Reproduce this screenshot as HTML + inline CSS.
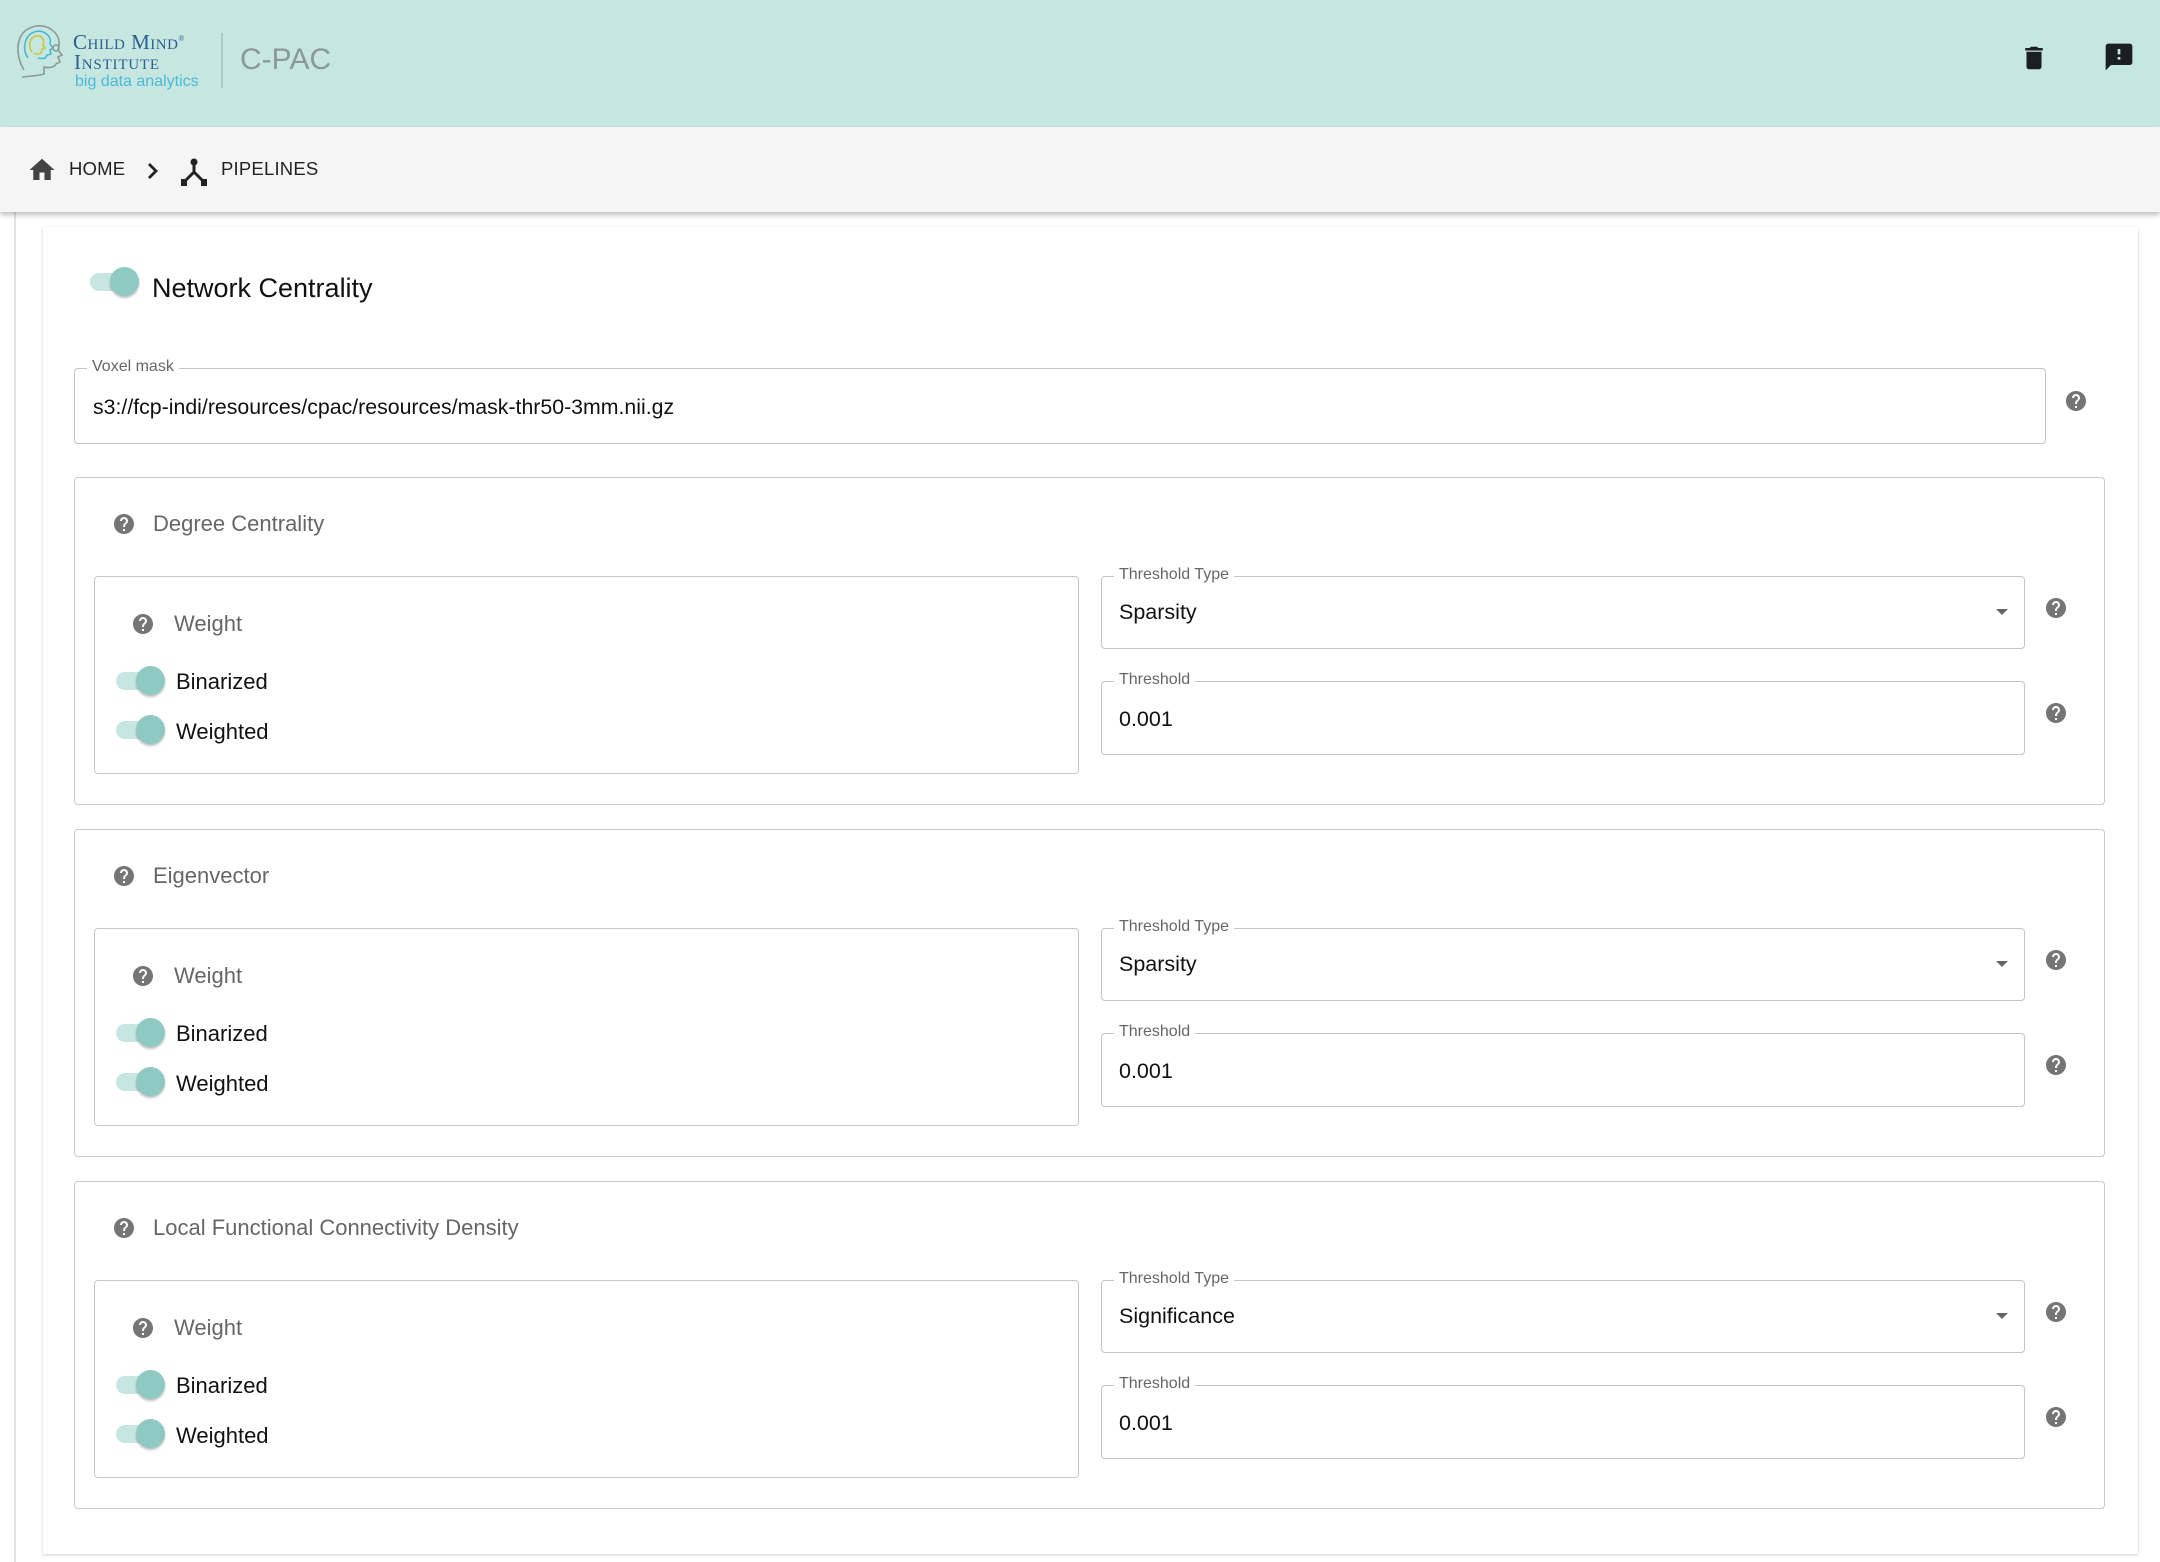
<!DOCTYPE html>
<html><head><meta charset="utf-8"><style>
*{box-sizing:border-box;margin:0;padding:0}
body{width:2160px;height:1562px;overflow:hidden;background:#fff;font-family:"Liberation Sans",sans-serif;position:relative}
.abs{position:absolute}
.hdr{left:0;top:0;width:2160px;height:127px;background:#c6e6e0}
.bc{left:0;top:127px;width:2160px;height:85px;background:#f5f5f5;box-shadow:0 3px 5px rgba(0,0,0,.25);z-index:2}
.bc span{position:absolute;top:31px;font-size:18.5px;color:#222;letter-spacing:.2px}
.card{left:43px;top:227px;width:2095px;height:1327px;background:#fff;box-shadow:0 1px 3px rgba(0,0,0,.2)}
.field{position:absolute;border:1.5px solid #c4c4c4;border-radius:4px}
.field .lab{position:absolute;left:12px;top:-11px;background:#fff;padding:0 5px;font-size:16px;color:#666}
.field .val{position:absolute;left:17px;font-size:21.5px;color:#111}
.sec{position:absolute;left:74px;width:2031px;height:328px;border:1.5px solid #c8c8c8;border-radius:4px}
.help{position:absolute;width:24px;height:24px}
.tg{position:absolute;width:50px;height:30px}
.tg .tr{position:absolute;left:0;top:6px;width:40px;height:18px;border-radius:9px;background:#c7e5e1}
.tg .th{position:absolute;left:20px;top:0;width:29px;height:29px;border-radius:50%;background:#8ecac2;box-shadow:0 2px 2px rgba(0,0,0,.25)}
.txt{position:absolute;white-space:nowrap}
</style></head><body>
<div class="abs hdr">
<svg class="abs" style="left:16px;top:22px" width="52" height="58" viewBox="0 0 52 58" fill="none" stroke-width="1.6">
<path d="M8 48 C2 38 0 26 4 16 C9 4 26 0 36 8 C44 14 44 22 42 28 L46 33 L42 35 L44 40 L40 42 C38 46 32 46 28 45 L28 52 C22 54 14 54 6 55" stroke="#8a9a9a"/>
<path d="M12 36 C6 28 8 14 18 10 C28 7 36 14 34 22 L37 26 L34 28 L35 32 L31 33 C30 37 26 37 22 36" stroke="#4bb8d8"/>
<path d="M16 30 C12 24 13 16 20 14 C26 13 29 18 27 23 L29 26 L26 27 L25 31 C22 33 19 32 18 31" stroke="#c8c840"/>
<circle cx="40" cy="26" r="3" stroke="#8a9a9a"/>
</svg>
<div class="txt" style="left:73px;top:30px;font-family:'Liberation Serif',serif;font-size:21px;color:#2b5f8e;font-variant:small-caps;letter-spacing:.5px">Child Mind<sup style="font-size:8px">®</sup></div>
<div class="txt" style="left:74px;top:50px;font-family:'Liberation Serif',serif;font-size:21px;color:#2b5f8e;font-variant:small-caps;letter-spacing:.8px">Institute</div>
<div class="txt" style="left:75px;top:73px;font-size:16px;color:#4bb8d8">big data analytics</div>
<div class="abs" style="left:221px;top:33px;width:1.5px;height:55px;background:#a8ccc6"></div>
<div class="txt" style="left:240px;top:43px;font-size:30px;color:#8a9896">C-PAC</div>
<svg class="abs" style="left:2019px;top:43px" width="30" height="30" viewBox="0 0 24 24"><path fill="#1b1f1f" d="M6 19c0 1.1.9 2 2 2h8c1.1 0 2-.9 2-2V7H6v12zM19 4h-3.5l-1-1h-5l-1 1H5v2h14V4z"/></svg>
<svg class="abs" style="left:2103px;top:41px" width="32" height="32" viewBox="0 0 24 24"><path fill="#1b1f1f" d="M20 2H4c-1.1 0-1.99.9-1.99 2L2 22l4-4h14c1.1 0 2-.9 2-2V4c0-1.1-.9-2-2-2zm-7 12h-2v-2h2v2zm0-4h-2V6h2v4z"/></svg>
</div>
<div class="abs bc">
<svg class="abs" style="left:27px;top:28px" width="30" height="30" viewBox="0 0 24 24"><path fill="#444" d="M10 20v-6h4v6h5v-8h3L12 3 2 12h3v8z"/></svg>
<span style="left:69px">HOME</span>
<svg class="abs" style="left:143px;top:31px" width="20" height="26" viewBox="0 0 20 26"><path d="M6 6 L13 13 L6 20" stroke="#222" stroke-width="2.8" fill="none"/></svg>
<svg class="abs" style="left:180px;top:30px" width="28" height="30" viewBox="0 0 28 30"><circle cx="14" cy="5" r="3.5" fill="#222"/><path d="M14 8 L14 15 L5 24 M14 15 L23 24" stroke="#222" stroke-width="3" fill="none"/><rect x="1" y="22" width="6" height="7" fill="#222"/><rect x="21" y="22" width="6" height="7" fill="#222"/></svg>
<span style="left:221px">PIPELINES</span>
</div>
<div class="abs" style="left:14px;top:212px;width:1.5px;height:1350px;background:#e2e2e2"></div>
<div class="abs card"></div>

<div class="tg" style="left:90px;top:267px"><div class="tr"></div><div class="th"></div></div>
<div class="txt" style="left:152px;top:273px;font-size:27px;color:#111">Network Centrality</div>

<div class="field" style="left:74px;top:368px;width:1972px;height:76px"><div class="lab">Voxel mask</div><div class="val" style="top:26px;left:18px;font-size:21.3px">s3://fcp-indi/resources/cpac/resources/mask-thr50-3mm.nii.gz</div></div>
<svg class="help" style="left:2064px;top:389px" viewBox="0 0 24 24"><path fill="#757575" d="M12 2C6.48 2 2 6.48 2 12s4.48 10 10 10 10-4.48 10-10S17.52 2 12 2zm1 17h-2v-2h2v2zm2.07-7.75l-.9.92C13.45 12.9 13 13.5 13 15h-2v-.5c0-1.1.45-2.1 1.17-2.83l1.24-1.26c.37-.36.59-.86.59-1.41 0-1.1-.9-2-2-2s-2 .9-2 2H8c0-2.210 1.79-4 4-4s4 1.79 4 4c0 .88-.36 1.68-.93 2.25z"/></svg>

<div id="secs"></div>
<script>
var H='<path fill="#757575" d="M12 2C6.48 2 2 6.48 2 12s4.48 10 10 10 10-4.48 10-10S17.52 2 12 2zm1 17h-2v-2h2v2zm2.07-7.75l-.9.92C13.45 12.9 13 13.5 13 15h-2v-.5c0-1.1.45-2.1 1.170-2.830l1.24-1.26c.37-.36.59-.86.59-1.41 0-1.1-.9-2-2-2s-2 .9-2 2H8c0-2.21 1.79-4 4-4s4 1.79 4 4c0 .88-.36 1.68-.93 2.25z"/>';
var S=[["Degree Centrality","Sparsity",477],["Eigenvector","Sparsity",829],["Local Functional Connectivity Density","Significance",1181]];
var o='';
S.forEach(function(s){
var t=s[2],L=74;
o+='<div class="sec" style="top:'+t+'px"></div>';
o+='<svg class="help" style="left:'+(L+38)+'px;top:'+(t+35)+'px" viewBox="0 0 24 24">'+H+'</svg>';
o+='<div class="txt" style="left:'+(L+79)+'px;top:'+(t+34)+'px;font-size:22px;color:#666">'+s[0]+'</div>';
o+='<div class="field" style="left:'+(L+20)+'px;top:'+(t+99)+'px;width:985px;height:198px;border-color:#c8c8c8"></div>';
o+='<svg class="help" style="left:'+(L+57)+'px;top:'+(t+135)+'px" viewBox="0 0 24 24">'+H+'</svg>';
o+='<div class="txt" style="left:'+(L+100)+'px;top:'+(t+134)+'px;font-size:22px;color:#666">Weight</div>';
o+='<div class="tg" style="left:'+(L+42)+'px;top:'+(t+189)+'px"><div class="tr"></div><div class="th"></div></div>';
o+='<div class="txt" style="left:'+(L+102)+'px;top:'+(t+192)+'px;font-size:22px;color:#111">Binarized</div>';
o+='<div class="tg" style="left:'+(L+42)+'px;top:'+(t+238)+'px"><div class="tr"></div><div class="th"></div></div>';
o+='<div class="txt" style="left:'+(L+102)+'px;top:'+(t+242)+'px;font-size:22px;color:#111">Weighted</div>';
o+='<div class="field" style="left:1101px;top:'+(t+99)+'px;width:924px;height:73px"><div class="lab">Threshold Type</div><div class="val" style="top:23px">'+s[1]+'</div><div style="position:absolute;right:16px;top:32px;width:0;height:0;border-left:6px solid transparent;border-right:6px solid transparent;border-top:6px solid #666"></div></div>';
o+='<svg class="help" style="left:2044px;top:'+(t+119)+'px" viewBox="0 0 24 24">'+H+'</svg>';
o+='<div class="field" style="left:1101px;top:'+(t+204)+'px;width:924px;height:74px"><div class="lab">Threshold</div><div class="val" style="top:25px">0.001</div></div>';
o+='<svg class="help" style="left:2044px;top:'+(t+224)+'px" viewBox="0 0 24 24">'+H+'</svg>';
});
document.getElementById('secs').innerHTML=o;
</script>
</body></html>
